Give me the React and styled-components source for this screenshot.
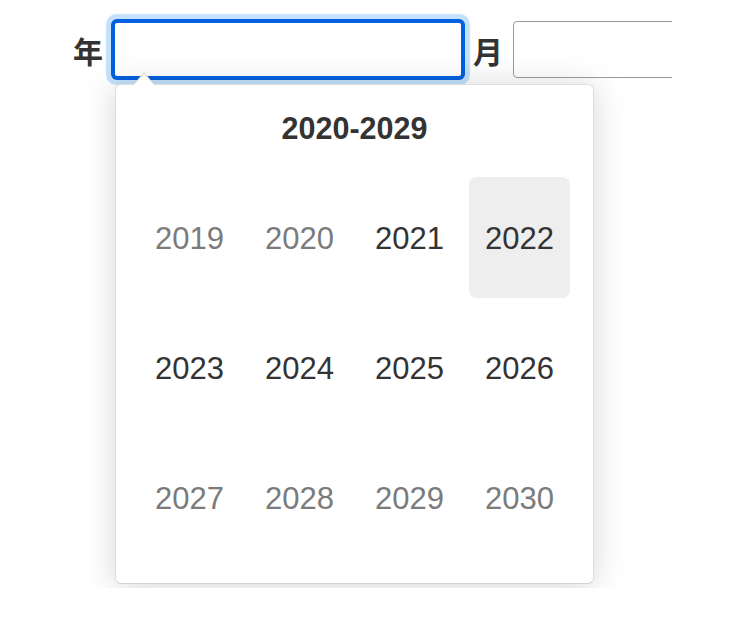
import React from "react";
import styled, { createGlobalStyle } from "styled-components";

const GlobalStyle = createGlobalStyle`
  body {
    margin: 0;
    background: #fff;
    font-family: "Liberation Sans", Arial, sans-serif;
  }
`;

const Frame = styled.div`
  width: 672px;
  height: 588px;
  overflow: hidden;
  padding: 21px 0 0 73px;
  box-sizing: border-box;
`;

const Row = styled.div`
  display: flex;
  align-items: center;
  gap: 10px;
`;

const Label = styled.span`
  font-family: "Noto Sans CJK SC", "Noto Sans", sans-serif;
  font-weight: 700;
  font-size: 30px;
  color: #333;
  line-height: 1;
`;

const Field = styled.div`
  position: relative;
  flex: none;
`;

const Input = styled.input`
  display: block;
  box-sizing: border-box;
  width: 350px;
  height: 57px;
  padding: 0 12px;
  font-size: 24px;
  font-family: "Liberation Sans", Arial, sans-serif;
  background: #fff;
  border-radius: 4px;
  outline: none;
  border: ${p => (p.$focused ? "2px solid #0060df" : "1px solid #9a9aa6")};
  box-shadow: ${p =>
    p.$focused ? "0 0 0 2px #0060df, 0 0 1px 7px #c4e1fb" : "none"};
`;

const Popup = styled.div`
  position: absolute;
  top: calc(100% + 6px);
  left: 2px;
  width: 479px;
  box-sizing: border-box;
  padding: 25px 23px;
  background: #fff;
  border: 1px solid #dedede;
  border-bottom-color: #d2d2d2;
  border-radius: 6px;
  box-shadow: 0 2px 32px rgba(0, 0, 0, 0.17);
  z-index: 2;

  &::before,
  &::after {
    content: "";
    position: absolute;
    left: 17px;
    border-left: 11px solid transparent;
    border-right: 11px solid transparent;
  }
  &::before {
    top: -13px;
    border-bottom: 13px solid #dcdcdc;
  }
  &::after {
    top: -11px;
    border-bottom: 12px solid #fff;
  }
`;

const Heading = styled.div`
  text-align: center;
  font-weight: 700;
  font-size: 30.5px;
  line-height: 36px;
  color: #333;
  margin-bottom: 31px;
`;

const Grid = styled.div`
  display: grid;
  grid-template-columns: repeat(4, 101px);
  grid-auto-rows: 121px;
  column-gap: 9px;
  row-gap: 9px;
`;

const Cell = styled.div`
  display: flex;
  align-items: center;
  justify-content: center;
  padding-top: 2px;
  font-size: 31px;
  border-radius: 8px;
  color: ${p => (p.$muted ? "#7b7b7b" : "#333")};
  background: ${p => (p.$active ? "#eeeeee" : "transparent")};
`;

const years = [
  2019, 2020, 2021, 2022, 2023, 2024, 2025, 2026, 2027, 2028, 2029, 2030
];
const mutedYears = [2019, 2020, 2027, 2028, 2029, 2030];

export default function App() {
  return (
    <Frame>
      <GlobalStyle />
      <Row>
        <Label>年</Label>
        <Field>
          <Input $focused readOnly />
          <Popup>
            <Heading>2020-2029</Heading>
            <Grid>
              {years.map(y => (
                <Cell
                  key={y}
                  $muted={mutedYears.includes(y)}
                  $active={y === 2022}
                >
                  {y}
                </Cell>
              ))}
            </Grid>
          </Popup>
        </Field>
        <Label>月</Label>
        <Field>
          <Input readOnly />
        </Field>
      </Row>
    </Frame>
  );
}
